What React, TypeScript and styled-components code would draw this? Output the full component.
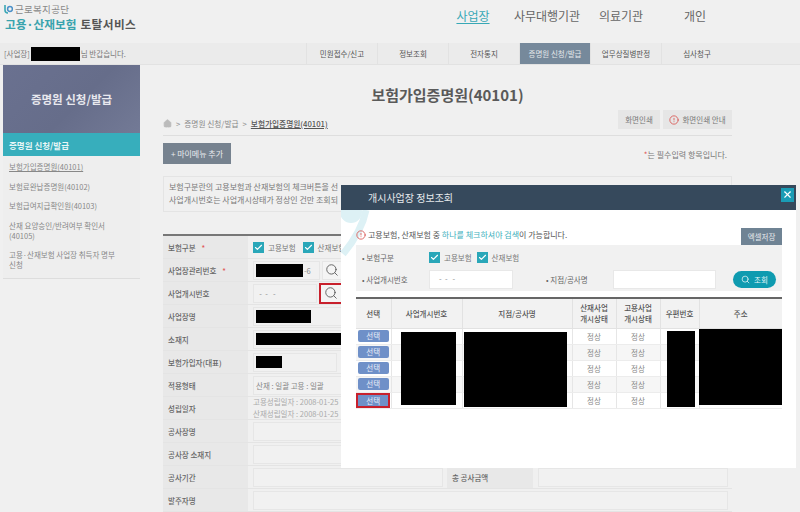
import React from 'react';
import styled, { createGlobalStyle } from 'styled-components';
import { CircleAlert, Home, Search, X, Check } from 'lucide-react';

const Global = createGlobalStyle`
  html, body { margin: 0; padding: 0; width: 800px; height: 512px; overflow: hidden; background: #f0f0f0; }
  body { font-family: "Noto Sans CJK KR", "Noto Sans", sans-serif; color: #666; }
  * { box-sizing: border-box; }
`;
const Page = styled.div`position: relative; width: 800px; height: 512px; overflow: hidden; background: #f0f0f0;`;
const Top = styled.header`height: 43px; display: flex; justify-content: space-between; padding-left: 4px;`;
const Logo = styled.div`display: flex; flex-direction: column; padding-top: 3px;`;
const Agency = styled.div`display: flex; align-items: center; gap: 2px; font-size: 9.5px; line-height: 12px; color: #888; letter-spacing: .3px;`;
const Title = styled.div`font-size: 11.7px; line-height: 17px; font-weight: 700; color: #555; padding-left: 1px; letter-spacing: .4px; span { color: #38a3ad; margin-right: 4px; letter-spacing: 0; }`;
const TopNav = styled.nav`display: flex; margin-right: 68px; padding-top: 6px;`;
const TopLink = styled.a<{ $on?: boolean }>`width: 74px; text-align: center; font-size: 12px; line-height: 20px; height: 20px; color: ${p => p.$on ? '#38a8b6' : '#666'}; text-decoration: ${p => p.$on ? 'underline' : 'none'}; text-underline-offset: 2px;`;
const SubBar = styled.div`height: 22px; background: #ebebeb; border-bottom: 1px solid #e2e2e2; display: flex; padding-left: 4px; padding-right: 68px; align-items: stretch; justify-content: space-between;`;
const Welcome = styled.div`display: flex; align-items: center; font-size: 7.5px; color: #777; gap: 1px;`;
const Mask = styled.span<{ $w: number; $h: number }>`display: inline-block; flex: none; width: ${p => p.$w}px; height: ${p => p.$h}px; background: #000;`;
const SubNav = styled.nav`display: flex;`;
const SubLink = styled.a<{ $on?: boolean }>`width: 71px; display: flex; align-items: center; justify-content: center; font-size: 7.5px; white-space: nowrap; color: ${p => p.$on ? '#e4e8ea' : '#555'}; background: ${p => p.$on ? '#76899b' : 'transparent'}; border-left: 1px solid #e2e2e2;`;
const Body = styled.div`display: flex; align-items: flex-start; padding-left: 3px;`;
const Side = styled.aside`width: 137px; flex: none; background: #eeeeee; border-bottom: 1px solid #ddd;`;
const SideHead = styled.div`height: 68px; background: linear-gradient(135deg, #6a7190, #666d8a 55%, #737a96); display: flex; align-items: center; justify-content: center; color: #e8e8ee; font-size: 11.5px; font-weight: 700;`;
const SideCur = styled.div`height: 23px; background: #37aebc; color: #e8f6f7; font-size: 8.5px; font-weight: 700; display: flex; align-items: center; padding-left: 6px;`;
const SideList = styled.ul`margin: 0; padding: 1px 6px 3px 6px; list-style: none;`;
const SideItem = styled.li<{ $on?: boolean }>`font-size: 7.5px; line-height: 10px; color: #888; padding: 5px 0 4.5px; text-decoration: ${p => p.$on ? 'underline' : 'none'};`;
const Main = styled.main`width: 569px; margin-left: 23px; flex: none;`;
const PageTitle = styled.h1`margin: 19px 0 0; height: 25px; font-size: 15px; line-height: 22px; font-weight: 700; text-align: center; color: #5a5a5a;`;
const CrumbRow = styled.div`height: 27px; display: flex; justify-content: space-between; border-bottom: 1px solid #dedede; padding-top: 1px;`;
const Crumb = styled.div`display: flex; align-items: center; gap: 4px; font-size: 7.7px; color: #888; padding-top: 1px; b { font-weight: 500; color: #555; text-decoration: underline; }`;
const Btns = styled.div`display: flex; gap: 3px;`;
const GrayBtn = styled.div<{ $w: number }>`height: 19px; width: ${p => p.$w}px; display: flex; align-items: center; justify-content: center; gap: 3px; background: #e6e6e6; font-size: 7.5px; color: #777;`;
const Tool = styled.div`display: flex; justify-content: space-between; align-items: center; margin-top: 7px; height: 21px;`;
const MyBtn = styled.div`width: 68px; height: 21px; background: #76828f; color: #e8ebee; font-size: 8px; display: flex; align-items: center; justify-content: center; gap: 3px;`;
const Note = styled.div`font-size: 8px; color: #777; padding: 2px 5px 0 0; em { color: #e05555; font-style: normal; }`;
const Info = styled.div`height: 36px; margin-top: 12px; border: 1px solid #e4e4e4; padding: 4px 5px; font-size: 8px; line-height: 12.5px; color: #777; white-space: nowrap; overflow: hidden;`;
const Form = styled.div`margin-top: 22px; border-top: 2px solid #777;`;
const Row = styled.div`display: grid; grid-template-columns: 85px 1fr; grid-template-rows: minmax(0, 1fr); height: 23px; border-bottom: 1px solid #e4e4e4;`;
const Label = styled.div`background: #e8e8e8; font-size: 7.5px; font-weight: 500; color: #666; display: flex; align-items: center; padding-left: 5px; gap: 6px; white-space: nowrap; em { color: #e05555; font-style: normal; }`;
const Cell = styled.div`display: flex; align-items: center; gap: 2px; padding: 0 4px 0 5px; font-size: 7.5px; color: #888; min-width: 0;`;
const Field = styled.div<{ $w?: number }>`height: 19px; ${p => p.$w ? `width:${p.$w}px;flex:none;` : 'flex:1;'} border: 1px solid #e6e6e6; background: #f1f1f1; display: flex; align-items: center; padding: 0 2px; font-size: 7.5px; color: #888; gap: 1px;`;
const SearchBtn = styled.div<{ $hi?: boolean }>`width: ${p => p.$hi ? 24 : 20}px; height: ${p => p.$hi ? 21 : 19}px; flex: none; display: flex; align-items: center; justify-content: center; color: #555; border: ${p => p.$hi ? '2px solid #c8202c' : '1px solid #e6e6e6'}; background: #f4f4f4;`;
const Box = styled.span`width: 11px; height: 11px; flex: none; background: #2aa7b9; display: inline-flex; align-items: center; justify-content: center; color: #fff;`;
const Check2 = styled.label`display: inline-flex; align-items: center; gap: 4px; font-size: 7.5px; color: #777; margin-right: 5px; white-space: nowrap;`;
const Two = styled.div`font-size: 7.5px; line-height: 12.5px; color: #aaa; white-space: nowrap;`;
const Pair = styled.div`display: grid; grid-template-columns: 85px 199px 86px 1fr; height: 23px; border-bottom: 1px solid #e4e4e4;`;
const Modal = styled.section`position: absolute; left: 341px; top: 185px; width: 455px; height: 283px; background: #fff; overflow: hidden;`;
const MHead = styled.div`position: relative; z-index: 1; height: 25px; background: #36495c; color: #e6e9ec; font-size: 10px; display: flex; align-items: center; justify-content: space-between; padding: 0 2px 0 27px;`;
const Close = styled.div`width: 13px; height: 14px; margin-top: -6px; background: #1a9cb5; display: flex; align-items: center; justify-content: center; color: #fff;`;
const Mark = styled.svg`position: absolute; left: 0; top: 25px;`;
const MBody = styled.div`position: relative; padding: 0 14px 0 15px;`;
const MsgRow = styled.div`height: 35px; display: flex; justify-content: space-between; align-items: flex-end;`;
const Msg = styled.div`display: flex; align-items: center; gap: 2px; font-size: 8px; color: #555; padding-bottom: 5px; b { color: #40b0bd; font-weight: 400; }`;
const Excel = styled.div`width: 41px; height: 17px; background: #6f8394; color: #e8ebee; font-size: 7.5px; display: flex; align-items: center; justify-content: center;`;
const Panel = styled.div`height: 46px; background: #f1f1f1; display: grid; grid-template-rows: 22px 22px; padding: 1px 6px 0 6px; align-items: center;`;
const PRow = styled.div`display: flex; align-items: center;`;
const PLabel = styled.div<{ $w: number }>`width: ${p => p.$w}px; flex: none; font-size: 7.5px; color: #666; white-space: nowrap;`;
const PInput = styled.div<{ $w: number }>`width: ${p => p.$w}px; height: 19px; flex: none; background: #fff; border: 1px solid #e8e8e8; font-size: 7.5px; color: #888; padding: 2px 9px;`;
const PGap = styled.span`width: 33px; flex: none;`;
const Find = styled.div`width: 43px; height: 17px; margin-left: 17px; border-radius: 9px; background: #0f9bb0; color: #e6f6f8; font-size: 7.5px; display: flex; align-items: center; justify-content: center; gap: 4px;`;
const TableWrap = styled.div`position: relative; margin-top: 6px; border-top: 2px solid #666;`;
const Table = styled.table`width: 426px; table-layout: fixed; border-collapse: collapse;`;
const Th = styled.th`height: 29px; padding: 0; background: #f2f2f2; border-right: 1px solid #e2e2e2; border-bottom: 1px solid #e2e2e2; font-size: 7.5px; line-height: 11px; font-weight: 500; color: #555; &:last-child { border-right: 0; }`;
const Tr = styled.tr<{ $alt: boolean }>`background: ${p => p.$alt ? '#f6f6f6' : '#fff'};`;
const Td = styled.td`height: 16px; padding: 0; border-right: 1px solid #e6e6e6; border-bottom: 1px solid #ececec; font-size: 7.5px; text-align: center; color: #888; &:last-child { border-right: 0; }`;
const Pick = styled.div<{ $hi?: boolean }>`width: ${p => p.$hi ? 34 : 31}px; height: ${p => p.$hi ? 15 : 12}px; margin: 0 auto; background: #6f90c8; color: #e8eef8; font-size: 7.5px; line-height: ${p => p.$hi ? 11 : 12}px; text-align: center; border-radius: ${p => p.$hi ? 0 : 2}px; border: ${p => p.$hi ? '2px solid #c8202c' : '0'};`;
const Cover = styled.div<{ $l: number; $t: number; $w: number; $h: number }>`position: absolute; left: ${p => p.$l}px; top: ${p => p.$t}px; width: ${p => p.$w}px; height: ${p => p.$h}px; background: #000;`;

const Chk = ({ t }: { t: string }) => <Check2><Box><Check size={9} strokeWidth={3} /></Box>{t}</Check2>;

export default function App() {
  return (
    <Page>
      <Global />
      <Top>
        <Logo>
          <Agency>
            <svg width="9" height="10" viewBox="0 0 9 10"><path d="M1 1v5a3 3 0 0 0 3 3" fill="none" stroke="#3aa7b5" strokeWidth="1.6" /><circle cx="6" cy="5" r="2.4" fill="none" stroke="#4a90c8" strokeWidth="1.5" /></svg>
            근로복지공단
          </Agency>
          <Title><span>고용·산재보험</span>토탈서비스</Title>
        </Logo>
        <TopNav>
          <TopLink $on>사업장</TopLink><TopLink>사무대행기관</TopLink><TopLink>의료기관</TopLink><TopLink>개인</TopLink>
        </TopNav>
      </Top>
      <SubBar>
        <Welcome>[사업장]<Mask $w={49} $h={14} /> 님 반갑습니다.</Welcome>
        <SubNav>
          <SubLink>민원접수/신고</SubLink><SubLink>정보조회</SubLink><SubLink>전자통지</SubLink>
          <SubLink $on>증명원 신청/발급</SubLink><SubLink>업무상질병판정</SubLink><SubLink>심사청구</SubLink>
        </SubNav>
      </SubBar>
      <Body>
        <Side>
          <SideHead>증명원 신청/발급</SideHead>
          <SideCur>증명원 신청/발급</SideCur>
          <SideList>
            <SideItem $on>보험가입증명원(40101)</SideItem>
            <SideItem>보험료완납증명원(40102)</SideItem>
            <SideItem>보험급여지급확인원(40103)</SideItem>
            <SideItem>산재 요양승인/반려여부 확인서<br />(40105)</SideItem>
            <SideItem>고용·산재보험 사업장 취득자 명부<br />신청</SideItem>
          </SideList>
        </Side>
        <Main>
          <PageTitle>보험가입증명원(40101)</PageTitle>
          <CrumbRow>
            <Crumb>
              <Home size={9} fill="#bbb" color="#bbb" />
              <span>&gt;</span><span>증명원 신청/발급</span><span>&gt;</span><b>보험가입증명원(40101)</b>
            </Crumb>
            <Btns>
              <GrayBtn $w={42}>화면인쇄</GrayBtn>
              <GrayBtn $w={69}><CircleAlert size={10} color="#d9534f" />화면인쇄 안내</GrayBtn>
            </Btns>
          </CrumbRow>
          <Tool>
            <MyBtn>+ 마이메뉴 추가</MyBtn>
            <Note><em>*</em>는 필수입력 항목입니다.</Note>
          </Tool>
          <Info>
            보험구분란의 고용보험과 산재보험의 체크버튼을 선<br />
            사업개시번호는 사업개시상태가 정상인 건만 조회되
          </Info>
          <Form>
            <Row><Label>보험구분 <em>*</em></Label><Cell><Chk t="고용보험" /><Chk t="산재보험" /></Cell></Row>
            <Row><Label>사업장관리번호 <em>*</em></Label><Cell><Field $w={67}><Mask $w={47} $h={13} />-6</Field><SearchBtn><Search size={14} strokeWidth={1.5} /></SearchBtn></Cell></Row>
            <Row><Label>사업개시번호</Label><Cell><Field $w={64}>&nbsp;&nbsp;-&nbsp;&nbsp;-&nbsp;&nbsp;&nbsp;-</Field><SearchBtn $hi><Search size={14} strokeWidth={1.5} /></SearchBtn></Cell></Row>
            <Row><Label>사업장명</Label><Cell><Field><Mask $w={55} $h={13} /></Field></Cell></Row>
            <Row><Label>소재지</Label><Cell><Field><Mask $w={460} $h={12} /></Field></Cell></Row>
            <Row><Label>보험가입자(대표)</Label><Cell><Field $w={84}><Mask $w={26} $h={12} /></Field></Cell></Row>
            <Row><Label>적용형태</Label><Cell><Field>산재 : 일괄 고용 : 일괄</Field></Cell></Row>
            <Row><Label>성립일자</Label><Cell><Two>고용성립일자 : 2008-01-25<br />산재성립일자 : 2008-01-25</Two></Cell></Row>
            <Row><Label>공사장명</Label><Cell><Field /></Cell></Row>
            <Row><Label>공사장 소재지</Label><Cell><Field /></Cell></Row>
            <Pair><Label>공사기간</Label><Cell><Field /></Cell><Label>총 공사금액</Label><Cell><Field /></Cell></Pair>
            <Row><Label>발주자명</Label><Cell><Field /></Cell></Row>
          </Form>
        </Main>
      </Body>
      <Modal>
        <Mark width="50" height="50" viewBox="0 0 50 50">
          <circle cx="10" cy="2" r="11" fill="#ddf1f5" />
          <path d="M25 0 C22 15 12 32 2 44" fill="none" stroke="#ddf1f5" strokeWidth="7" />
        </Mark>
        <MHead>개시사업장 정보조회<Close><X size={11} strokeWidth={2.5} /></Close></MHead>
        <MBody>
          <MsgRow>
            <Msg><CircleAlert size={10} color="#d9534f" /><span>고용보험, 산재보험 중 <b>하나를 체크하셔야 검색</b>이 가능합니다.</span></Msg>
            <Excel>엑셀저장</Excel>
          </MsgRow>
          <Panel>
            <PRow><PLabel $w={67}>• 보험구분</PLabel><Chk t="고용보험" /><Chk t="산재보험" /></PRow>
            <PRow>
              <PLabel $w={67}>• 사업개시번호</PLabel><PInput $w={84}>- &nbsp;-&nbsp; &nbsp;-</PInput>
              <PGap />
              <PLabel $w={67}>• 지점/공사명</PLabel><PInput $w={103} />
              <Find><Search size={9} />조회</Find>
            </PRow>
          </Panel>
          <TableWrap>
            <Table>
              <colgroup>{[35, 71, 110, 44, 44, 39, 83].map((w, i) => <col key={i} width={w} />)}</colgroup>
              <thead><tr>
                <Th>선택</Th><Th>사업개시번호</Th><Th>지점/공사명</Th><Th>산재사업<br />개시상태</Th><Th>고용사업<br />개시상태</Th><Th>우편번호</Th><Th>주소</Th>
              </tr></thead>
              <tbody>
                {[0, 1, 2, 3, 4].map(i => (
                  <Tr key={i} $alt={i % 2 === 1}>
                    <Td><Pick $hi={i === 4}>선택</Pick></Td><Td /><Td /><Td>정상</Td><Td>정상</Td><Td /><Td />
                  </Tr>
                ))}
              </tbody>
            </Table>
            <Cover $l={45} $t={33} $w={55} $h={73} />
            <Cover $l={108} $t={33} $w={103} $h={75} />
            <Cover $l={311} $t={32} $w={28} $h={76} />
            <Cover $l={343} $t={30} $w={83} $h={76} />
          </TableWrap>
        </MBody>
      </Modal>
    </Page>
  );
}
